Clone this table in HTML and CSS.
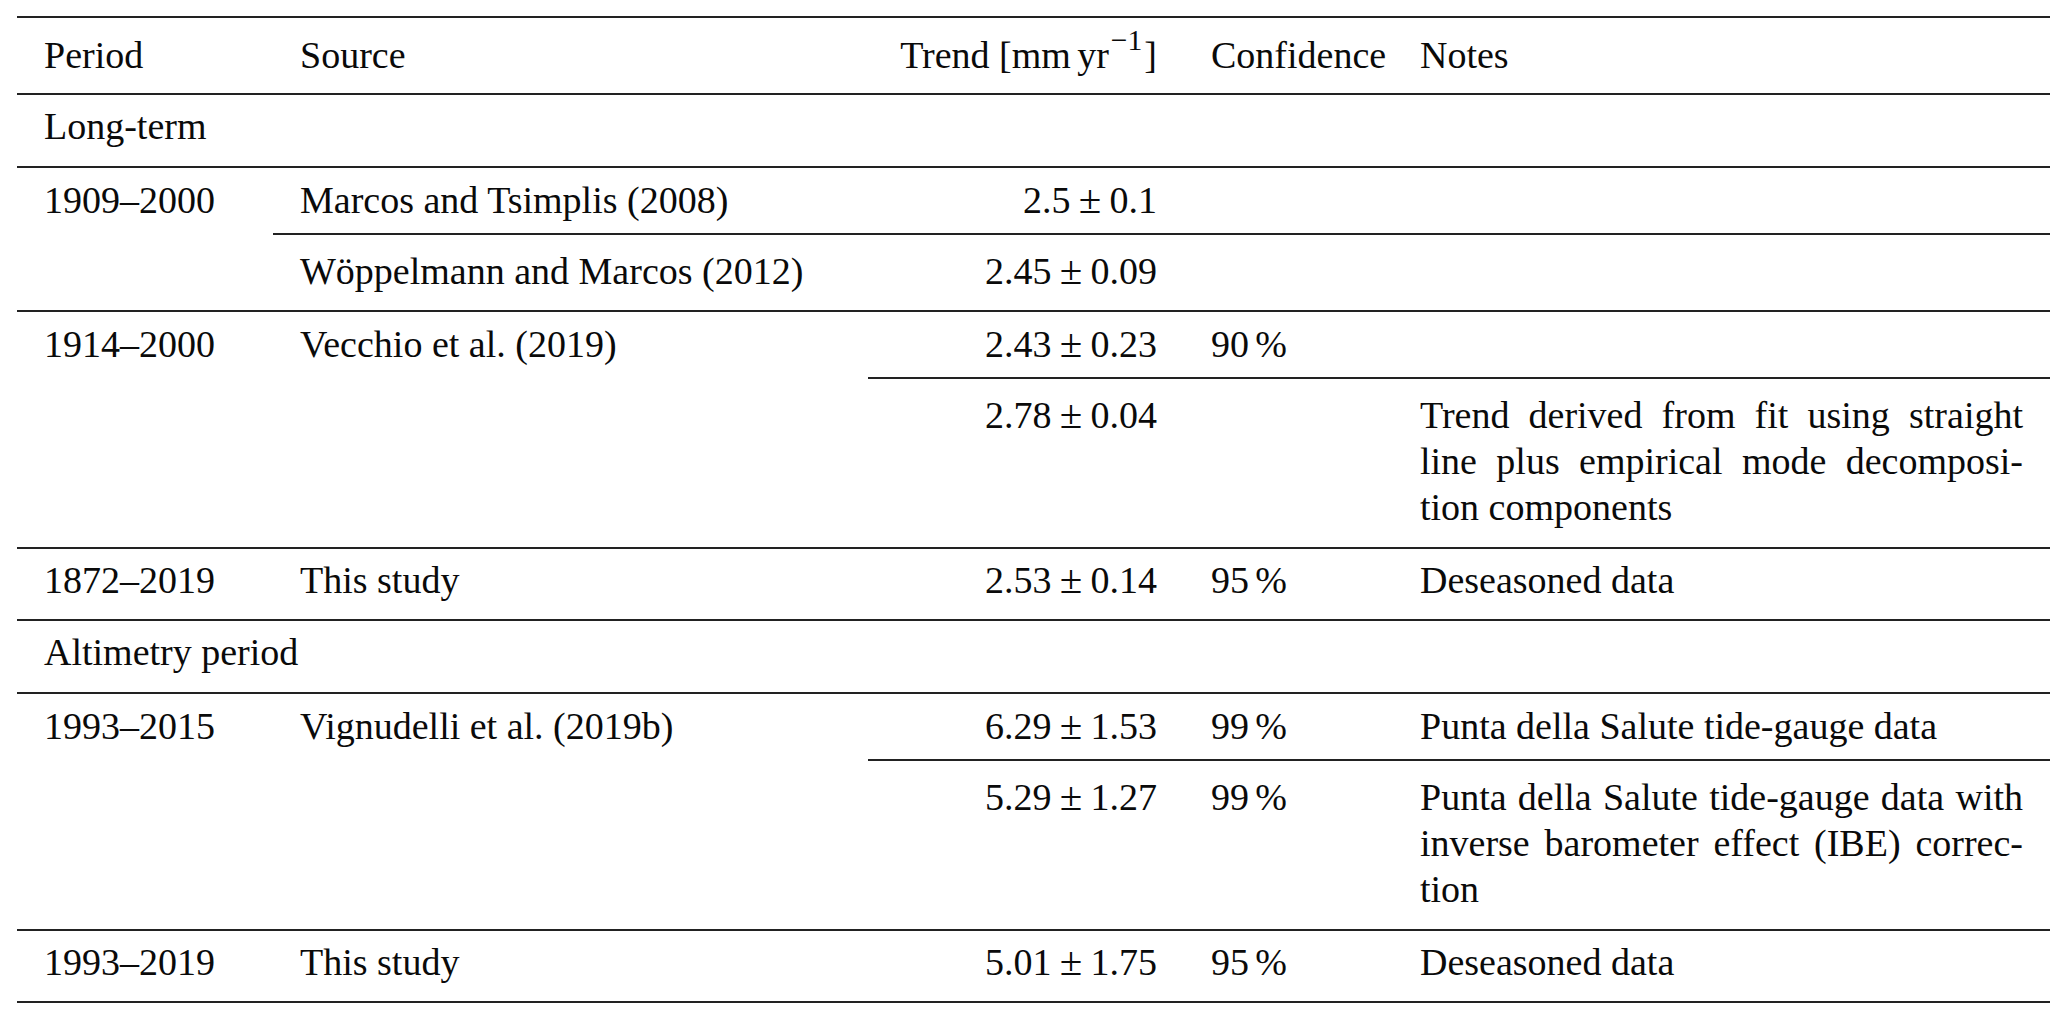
FILE: index.html
```html
<!DOCTYPE html>
<html lang="en">
<head>
<meta charset="utf-8">
<title>Sea level trends</title>
<link rel="stylesheet" href="styles.css">
</head>
<body>
<div class="tbl">
  <div class="c h">Period</div>
  <div class="c h">Source</div>
  <div class="c h r">Trend [mm<span class="ts"></span>yr<sup class="sup">−1</sup>]</div>
  <div class="c h">Confidence</div>
  <div class="c h">Notes</div>

  <div class="c sec">Long-term</div>

  <div class="c span2">1909–2000</div>
  <div class="c a">Marcos and Tsimplis (2008)</div>
  <div class="c a r">2.5<span class="pm">±</span>0.1</div>
  <div class="c a"></div>
  <div class="c a"></div>

  <div class="c b">Wöppelmann and Marcos (2012)</div>
  <div class="c b r">2.45<span class="pm">±</span>0.09</div>
  <div class="c b"></div>
  <div class="c b"></div>

  <div class="c span2">1914–2000</div>
  <div class="c span2">Vecchio et al. (2019)</div>
  <div class="c a r">2.43<span class="pm">±</span>0.23</div>
  <div class="c a">90<span class="ts"></span>%</div>
  <div class="c a"></div>

  <div class="c b3 r">2.78<span class="pm">±</span>0.04</div>
  <div class="c b3"></div>
  <div class="c b3"><span class="jl">Trend derived from fit using straight</span><span class="jl">line plus empirical mode decomposi-</span>tion components</div>

  <div class="c">1872–2019</div>
  <div class="c">This study</div>
  <div class="c r">2.53<span class="pm">±</span>0.14</div>
  <div class="c">95<span class="ts"></span>%</div>
  <div class="c">Deseasoned data</div>

  <div class="c sec">Altimetry period</div>

  <div class="c span2">1993–2015</div>
  <div class="c span2">Vignudelli et al. (2019b)</div>
  <div class="c a r">6.29<span class="pm">±</span>1.53</div>
  <div class="c a">99<span class="ts"></span>%</div>
  <div class="c a">Punta della Salute tide-gauge data</div>

  <div class="c b3 r">5.29<span class="pm">±</span>1.27</div>
  <div class="c b3">99<span class="ts"></span>%</div>
  <div class="c b3"><span class="jl">Punta della Salute tide-gauge data with</span><span class="jl">inverse barometer effect (IBE) correc-</span>tion</div>

  <div class="c">1993–2019</div>
  <div class="c">This study</div>
  <div class="c r">5.01<span class="pm">±</span>1.75</div>
  <div class="c">95<span class="ts"></span>%</div>
  <div class="c">Deseasoned data</div>
</div>
</body>
</html>
```

FILE: styles.css
```css
html, body {
  margin: 0;
  padding: 0;
  background: #ffffff;
}

body {
  font-family: "Liberation Serif", "Times New Roman", serif;
  font-size: 38px;
  line-height: 46px;
  color: #0a0a0a;
}

.tbl {
  display: grid;
  grid-template-columns: 256px 595px 316px 209px 657px;
  margin: 16px 0 0 17px;
  width: 2033px;
}

.c {
  padding: 8px 27px 16px 27px;
  border-bottom: 2px solid #222222;
  white-space: nowrap;
}

.h {
  border-top: 2px solid #222222;
  padding-top: 14px;
  padding-bottom: 15px;
}

.sec {
  grid-column: 1 / -1;
  padding-top: 8px;
  padding-bottom: 17px;
}

.a {
  padding-top: 9px;
  padding-bottom: 10px;
}

.b {
  padding-top: 13px;
  padding-bottom: 16px;
}

.b3 {
  padding-top: 13px;
  padding-bottom: 17px;
  white-space: normal;
}

.span2 {
  grid-row: span 2;
  padding-top: 9px;
  padding-bottom: 0;
}

.r {
  text-align: right;
}

.pm {
  font-size: 1.08em;
  line-height: 0;
  margin: 0 0.2em;
}

.ts {
  display: inline-block;
  width: 0.167em;
}

.sup {
  font-size: 0.78em;
  line-height: 0;
  vertical-align: 0.62em;
  margin-left: 2px;
  margin-right: 2px;
}

.jl {
  display: block;
  text-align: justify;
  text-align-last: justify;
  white-space: normal;
}
```
